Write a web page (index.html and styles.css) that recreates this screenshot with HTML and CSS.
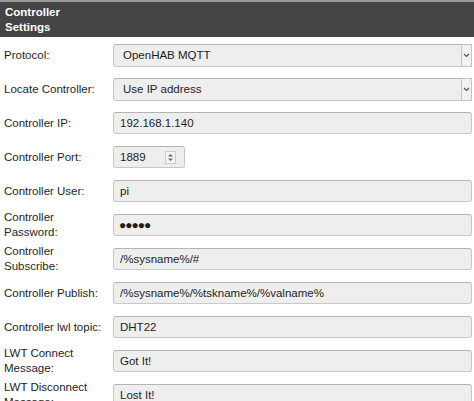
FILE: index.html
```html
<!DOCTYPE html>
<html lang="en">
<head>
  <meta charset="UTF-8">
  <meta name="viewport" content="width=device-width, initial-scale=1.0">
  <title>Controller Settings</title>
  <link rel="stylesheet" href="styles.css">
</head>
<body>
  <div class="head">Controller<br>Settings</div>

  <div class="form">
    <div class="row">
      <label>Protocol:</label>
      <div class="sel">OpenHAB MQTT<span class="arrow"><svg width="7" height="5" viewBox="0 0 7 5"><path d="M1 1 L3.5 3.5 L6 1" fill="none" stroke="#555" stroke-width="1.2"/></svg></span></div>
    </div>
    <div class="row">
      <label>Locate Controller:</label>
      <div class="sel">Use IP address<span class="arrow"><svg width="7" height="5" viewBox="0 0 7 5"><path d="M1 1 L3.5 3.5 L6 1" fill="none" stroke="#555" stroke-width="1.2"/></svg></span></div>
    </div>
    <div class="row">
      <label>Controller IP:</label>
      <input class="field" type="text" value="192.168.1.140">
    </div>
    <div class="row">
      <label>Controller Port:</label>
      <div class="port">
        <span>1889</span>
        <span class="spin"><svg width="7" height="9" viewBox="0 0 7 9"><path d="M1 3.5 L3.5 1 L6 3.5 Z M1 5.5 L3.5 8 L6 5.5 Z" fill="#666"/></svg></span>
      </div>
    </div>
    <div class="row">
      <label>Controller User:</label>
      <input class="field" type="text" value="pi">
    </div>
    <div class="row">
      <label>Controller Password:</label>
      <div class="field pwd">&#9679;&#9679;&#9679;&#9679;&#9679;</div>
    </div>
    <div class="row">
      <label>Controller Subscribe:</label>
      <input class="field" type="text" value="/%sysname%/#">
    </div>
    <div class="row">
      <label>Controller Publish:</label>
      <input class="field" type="text" value="/%sysname%/%tskname%/%valname%">
    </div>
    <div class="row">
      <label>Controller lwl topic:</label>
      <input class="field" type="text" value="DHT22">
    </div>
    <div class="row">
      <label>LWT Connect Message:</label>
      <input class="field" type="text" value="Got It!">
    </div>
    <div class="row">
      <label>LWT Disconnect Message:</label>
      <input class="field" type="text" value="Lost It!">
    </div>
  </div>
</body>
</html>
```

FILE: styles.css
```css
body {
  margin: 0;
  background: #fff;
  font-family: "Liberation Sans", Arial, sans-serif;
  font-size: 11.5px;
  color: #1e1e1e;
  overflow: hidden;
}
.head {
  background: #444;
  border-top: 2px solid #9a9a9a;
  color: #fff;
  font-weight: bold;
  font-size: 11.5px;
  line-height: 15px;
  padding: 3px 5px 5px;
  box-sizing: border-box;
  height: 37px;
}
.form {
  padding-top: 1px;
}
.row {
  display: flex;
  align-items: center;
  height: 34px;
}
.row label {
  width: 102px;
  padding-left: 4px;
  margin-right: 7px;
  line-height: 15px;
}
.field, .sel, .port {
  box-sizing: border-box;
  height: 22px;
  background: #eee;
  border: 1px solid #c8c8c8;
  border-top-color: #b4b4b4;
  border-radius: 3px;
  font-family: "Liberation Sans", Arial, sans-serif;
  font-size: 11.5px;
  color: #1e1e1e;
  padding: 0 6px;
  margin: 0;
}
.field {
  width: 359px;
  outline: none;
}
.pwd {
  display: flex;
  align-items: center;
  font-size: 12px;
  letter-spacing: -1px;
  padding-left: 5px;
}
.sel {
  position: relative;
  width: 359px;
  height: 23px;
  line-height: 21px;
  padding-left: 9px;
}
.arrow {
  position: absolute;
  right: -1px;
  top: -1px;
  width: 11px;
  height: 23px;
  box-sizing: border-box;
  border: 1px solid #c4c4c4;
  background: #f2f2f2;
  display: flex;
  align-items: center;
  justify-content: center;
}
.port {
  width: 72px;
  display: flex;
  align-items: center;
  justify-content: space-between;
}
.spin {
  width: 9px;
  height: 11px;
  border: 1px solid #ccc;
  background: #f4f4f4;
  display: flex;
  align-items: center;
  justify-content: center;
  margin-right: 2px;
}
```
